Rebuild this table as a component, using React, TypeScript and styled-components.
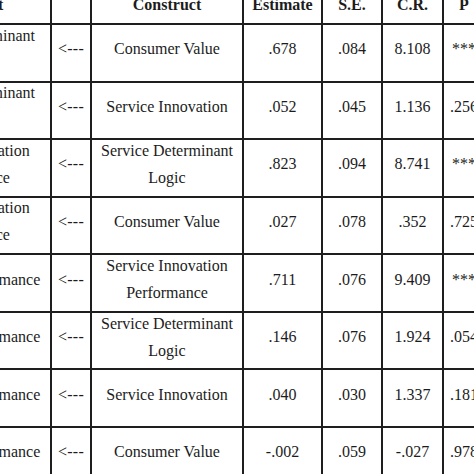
import React from "react";
import styled, { createGlobalStyle } from "styled-components";

const GlobalStyle = createGlobalStyle`
  html, body {
    margin: 0;
    padding: 0;
    background: #ffffff;
  }
  body {
    font-family: "Liberation Serif", "Times New Roman", serif;
    color: #1c1c1c;
  }
`;

const Page = styled.div`
  width: 474px;
  height: 474px;
  overflow: hidden;
  background: #ffffff;
`;

const Table = styled.div`
  display: grid;
  grid-template-columns: 162px 38px 150px 77px 58px 59px 40px;
  grid-template-rows: 29px repeat(8, 55.57px);
  gap: 2px;
  padding: 2px;
  background: #1e1e1e;
  width: max-content;
  margin-left: -114px;
  margin-top: -8px;
`;

const Cell = styled.div<{ $head?: boolean }>`
  background: #ffffff;
  display: flex;
  align-items: center;
  justify-content: center;
  text-align: center;
  padding: ${(p) => (p.$head ? "0 4px 8px" : "0 6px 8px")};
  box-sizing: border-box;
  font-size: 16px;
  line-height: 27px;
  font-weight: ${(p) => (p.$head ? 700 : 400)};
`;

const Arrow = styled(Cell)`
  padding: 0 0 8px;
  white-space: nowrap;
  letter-spacing: 0.3px;
`;

const headers = ["Construct", "", "Construct", "Estimate", "S.E.", "C.R.", "P"];

const rows = [
  ["Service Determinant Logic", "Consumer Value", ".678", ".084", "8.108", "***"],
  ["Service Determinant Logic", "Service Innovation", ".052", ".045", "1.136", ".256"],
  ["Service Innovation Performance", "Service Determinant Logic", ".823", ".094", "8.741", "***"],
  ["Service Innovation Performance", "Consumer Value", ".027", ".078", ".352", ".725"],
  ["Business Performance", "Service Innovation Performance", ".711", ".076", "9.409", "***"],
  ["Business Performance", "Service Determinant Logic", ".146", ".076", "1.924", ".054"],
  ["Business Performance", "Service Innovation", ".040", ".030", "1.337", ".181"],
  ["Business Performance", "Consumer Value", "-.002", ".059", "-.027", ".978"],
];

export default function App() {
  return (
    <>
      <GlobalStyle />
      <Page>
        <Table>
          {headers.map((h, i) => (
            <Cell key={"h" + i} $head>
              {h}
            </Cell>
          ))}
          {rows.map((r, i) => (
            <React.Fragment key={i}>
              <Cell>{r[0]}</Cell>
              <Arrow>&lt;---</Arrow>
              <Cell>{r[1]}</Cell>
              <Cell>{r[2]}</Cell>
              <Cell>{r[3]}</Cell>
              <Cell>{r[4]}</Cell>
              <Cell>{r[5]}</Cell>
            </React.Fragment>
          ))}
        </Table>
      </Page>
    </>
  );
}
